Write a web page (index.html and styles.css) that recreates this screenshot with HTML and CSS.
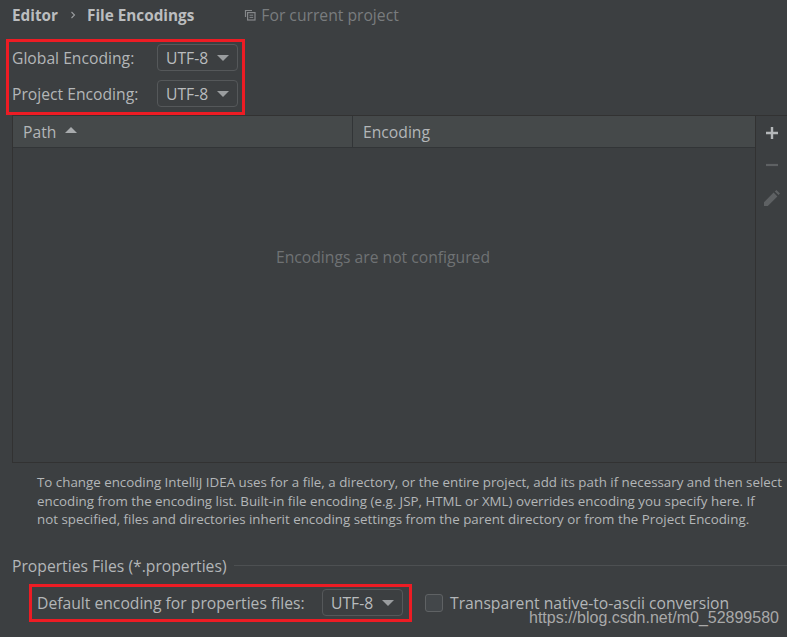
FILE: index.html
```html
<!DOCTYPE html>
<html lang="en">
<head>
    <meta charset="UTF-8">
    <title>File Encodings</title>
    <link rel="stylesheet" href="styles.css">
</head>
<body>
    <div class="breadcrumb">
        <strong>Editor</strong>
        <svg class="crumb-arrow" width="6" height="8" viewBox="0 0 6 8"><path d="M1.5 1L4.5 4L1.5 7" fill="none" stroke="#9a9d9f" stroke-width="1.1"/></svg>
        <strong>File Encodings</strong>
        <svg class="scope-icon" width="12" height="12" viewBox="0 0 12 12"><path d="M1.5 8V1.5H8" fill="none" stroke="#85888a" stroke-width="1.2"/><rect x="3.6" y="3.6" width="7.4" height="7.4" fill="none" stroke="#85888a" stroke-width="1.2"/><path d="M5.5 6.2H9.2M5.5 8.4H9.2" stroke="#85888a"/></svg>
        <span class="scope">For current project</span>
    </div>

    <div class="highlight encodings">
        <div class="field">
            <label>Global Encoding:</label>
            <div class="select"><span>UTF-8</span><i class="caret"></i></div>
        </div>
        <div class="field">
            <label>Project Encoding:</label>
            <div class="select"><span>UTF-8</span><i class="caret"></i></div>
        </div>
    </div>

    <div class="table-wrap">
        <div class="table">
            <div class="table-head">
                <div class="col col-path">Path <i class="caret-up"></i></div>
                <div class="col col-enc">Encoding</div>
            </div>
            <div class="table-body">Encodings are not configured</div>
        </div>
        <div class="tools">
            <svg width="16" height="16" viewBox="0 0 16 16"><path d="M8 2V14M2 8H14" stroke="#b4b7b9" stroke-width="2.4"/></svg>
            <svg width="16" height="16" viewBox="0 0 16 16"><path d="M2 8H14" stroke="#5e6163" stroke-width="2.2"/></svg>
            <svg width="18" height="18" viewBox="0 0 18 18"><path d="M1 17V13.2L10.6 3.6L14.4 7.4L4.8 17Z M11.8 2.4L13.4 0.9L17 4.5L15.5 6.1Z" fill="#5e6163"/></svg>
        </div>
    </div>

    <p class="help">To change encoding IntelliJ IDEA uses for a file, a directory, or the entire project, add its path if necessary and then select encoding from the encoding list. Built-in file encoding (e.g. JSP, HTML or XML) overrides encoding you specify here. If<br>not specified, files and directories inherit encoding settings from the parent directory or from the Project Encoding.</p>

    <div class="section-title">
        <span>Properties Files (*.properties)</span>
        <div class="rule"></div>
    </div>

    <div class="props-row">
        <div class="highlight props">
            <label>Default encoding for properties files:</label>
            <div class="select"><span>UTF-8</span><i class="caret"></i></div>
        </div>
        <div class="checkbox"></div>
        <span class="check-label">Transparent native-to-ascii conversion</span>
    </div>

    <div class="watermark">https://blog.csdn.net/m0_52899580</div>
</body>
</html>
```

FILE: styles.css
```css
html, body {
    height: 100%;
}
body {
    position: relative;
    margin: 0;
    overflow: hidden;
    background: #3c3f41;
    color: #b3b6b8;
    font-family: "Open Sans", "Noto Sans", sans-serif;
    font-size: 15.7px;
}
.breadcrumb {
    display: flex;
    align-items: center;
    height: 29px;
    margin-bottom: 10px;
    padding-left: 12px;
    color: #bbbdbf;
}
.breadcrumb strong {
    font-weight: 700;
    font-size: 15.3px;
}
.crumb-arrow {
    margin: 0 11px 0 12px;
}
.scope-icon {
    margin-left: 50px;
    margin-right: 5px;
}
.scope {
    color: #797c7e;
}
.highlight {
    border: 3px solid #ed1c24;
}
.encodings {
    display: flex;
    flex-direction: column;
    gap: 9px;
    width: 233px;
    height: 68px;
    margin-left: 6px;
    padding-top: 2px;
}
.field {
    display: flex;
    align-items: center;
    padding-left: 3px;
}
.field label {
    width: 145px;
}
.select {
    display: flex;
    align-items: center;
    justify-content: space-between;
    box-sizing: border-box;
    width: 81px;
    height: 27px;
    padding: 0 8px;
    border: 1px solid #55585a;
    border-radius: 4px;
    color: #b9bcbe;
}
.caret {
    width: 0;
    height: 0;
    border-left: 6.5px solid transparent;
    border-right: 6.5px solid transparent;
    border-top: 6px solid #9a9d9f;
}
.caret-up {
    display: inline-block;
    width: 0;
    height: 0;
    margin: 0 0 3px 9px;
    border-left: 6px solid transparent;
    border-right: 6px solid transparent;
    border-bottom: 6px solid #a8abad;
}
.table-wrap {
    display: flex;
    height: 346px;
    margin-left: 12px;
    border-top: 1px solid #323232;
    border-bottom: 1px solid #323232;
    border-left: 1px solid #323232;
}
.table {
    display: flex;
    flex-direction: column;
    width: 742px;
}
.table-head {
    display: flex;
    height: 31px;
    background: #45494a;
    border-bottom: 1px solid #323537;
}
.col {
    display: flex;
    align-items: center;
    padding-left: 10px;
}
.col-path {
    box-sizing: border-box;
    width: 340px;
    border-right: 1px solid #323537;
}
.table-body {
    flex: 1;
    display: flex;
    align-items: center;
    justify-content: center;
    padding-bottom: 96px;
    padding-right: 2px;
    color: #6f7274;
}
.tools {
    flex: 1;
    display: flex;
    flex-direction: column;
    align-items: center;
    gap: 16px;
    padding-top: 9px;
    border-left: 1px solid #323232;
}
.help {
    margin: 10px 4px 0 37px;
    font-size: 13.33px;
    line-height: 18.5px;
    color: #b3b6b8;
}
.section-title {
    display: flex;
    align-items: center;
    margin: 26px 0 0 12px;
}
.rule {
    flex: 1;
    height: 1px;
    margin-left: 7px;
    background: #4d5052;
}
.props-row {
    display: flex;
    align-items: center;
    margin: 7px 0 0 29px;
}
.props {
    display: flex;
    align-items: center;
    justify-content: space-between;
    box-sizing: border-box;
    width: 383px;
    height: 38px;
    padding: 0 6px 0 5px;
}
.checkbox {
    box-sizing: border-box;
    width: 18px;
    height: 18px;
    margin-left: 13px;
    background: #43474a;
    border: 1px solid #5f6264;
    border-radius: 3px;
}
.check-label {
    margin-left: 7px;
    color: #b3b6b8;
}
.watermark {
    position: absolute;
    left: 529px;
    top: 609px;
    font-family: "Liberation Sans", sans-serif;
    font-size: 16px;
    color: #a9a9a9;
}
```
